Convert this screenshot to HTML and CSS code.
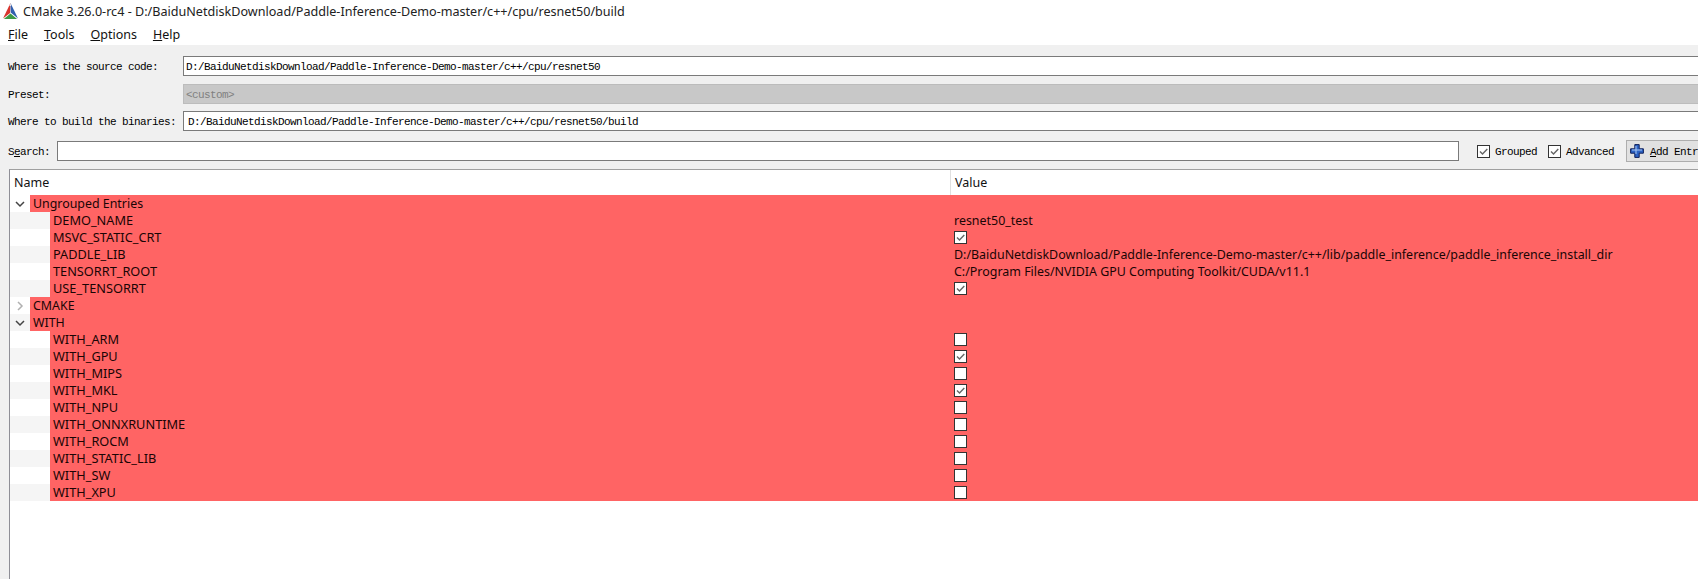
FILE: index.html
```html
<!DOCTYPE html>
<html lang="en">
<head>
<meta charset="utf-8">
<title>CMake</title>
<link rel="stylesheet" href="styles.css">
</head>
<body>
<header class="titlebar">
  <svg class="logo" viewBox="0 0 16 16" width="17" height="16"><polygon points="8,0 7.6,10 0.5,15.5" fill="#d8352e"/><polygon points="8,0 8.2,9.6 15.5,15.5" fill="#2f5fae"/><polygon points="1.4,16 8,10.6 14.6,16" fill="#3c9a46"/><polygon points="8,0 6.9,3 8.6,3" fill="#e9e9e9"/></svg>
  <span>CMake 3.26.0-rc4 - D:/BaiduNetdiskDownload/Paddle-Inference-Demo-master/c++/cpu/resnet50/build</span>
</header>
<nav class="menubar">
  <span><u>F</u>ile</span><span><u>T</u>ools</span><span><u>O</u>ptions</span><span><u>H</u>elp</span>
</nav>
<main class="form">
  <div class="field-row">
    <label class="label">Where is the source code:</label>
    <div class="field field-source">D:/BaiduNetdiskDownload/Paddle-Inference-Demo-master/c++/cpu/resnet50</div>
  </div>
  <div class="field-row">
    <label class="label">Preset:</label>
    <div class="field field-preset">&lt;custom&gt;</div>
  </div>
  <div class="field-row">
    <label class="label">Where to build the binaries:</label>
    <div class="field field-build">D:/BaiduNetdiskDownload/Paddle-Inference-Demo-master/c++/cpu/resnet50/build</div>
  </div>
  <div class="search-row">
    <label class="label label-search">S<u>e</u>arch:</label>
    <div class="field field-search"></div>
    <div class="opt opt-grouped"><span class="check"><svg viewBox="0 0 11 11"><path d="M2 5.5l2.5 2.5 4.8-5" class="tick"/></svg></span><span class="label">Grouped</span></div>
    <div class="opt opt-advanced"><span class="check"><svg viewBox="0 0 11 11"><path d="M2 5.5l2.5 2.5 4.8-5" class="tick"/></svg></span><span class="label">Advanced</span></div>
    <div class="add-btn">
      <svg viewBox="0 0 14 14" width="14" height="14"><path d="M4.8.6h4.4v4.2h4.2v4.4H9.2v4.2H4.8V9.2H.6V4.8h4.2z" fill="#2c62c4" stroke="#10205a" stroke-width="1"/><path d="M2 6h10M6 2v8" stroke="#a8c8f4" stroke-width="1"/></svg>
      <span class="label"><u>A</u>dd Entry</span>
    </div>
  </div>
  <section class="tree">
    <div class="tree-head"><div class="head-name">Name</div><div class="head-value">Value</div></div>
    <div class="tree-body">
      <div class="row group"><div class="gutter"><svg class="chev" viewBox="0 0 10 10"><path d="M1 3l4 4 4-4"/></svg></div><div class="cell-name">Ungrouped Entries</div><div class="cell-value"></div></div>
      <div class="row"><div class="gutter"></div><div class="cell-name">DEMO_NAME</div><div class="cell-value">resnet50_test</div></div>
      <div class="row"><div class="gutter"></div><div class="cell-name">MSVC_STATIC_CRT</div><div class="cell-value"><span class="check"><svg viewBox="0 0 11 11"><path d="M2 5.5l2.5 2.5 4.8-5" class="tick"/></svg></span></div></div>
      <div class="row"><div class="gutter"></div><div class="cell-name">PADDLE_LIB</div><div class="cell-value">D:/BaiduNetdiskDownload/Paddle-Inference-Demo-master/c++/lib/paddle_inference/paddle_inference_install_dir</div></div>
      <div class="row"><div class="gutter"></div><div class="cell-name">TENSORRT_ROOT</div><div class="cell-value">C:/Program Files/NVIDIA GPU Computing Toolkit/CUDA/v11.1</div></div>
      <div class="row"><div class="gutter"></div><div class="cell-name">USE_TENSORRT</div><div class="cell-value"><span class="check"><svg viewBox="0 0 11 11"><path d="M2 5.5l2.5 2.5 4.8-5" class="tick"/></svg></span></div></div>
      <div class="row group"><div class="gutter"><svg class="chev chev-closed" viewBox="0 0 10 10"><path d="M3 1l4 4-4 4"/></svg></div><div class="cell-name">CMAKE</div><div class="cell-value"></div></div>
      <div class="row group"><div class="gutter"><svg class="chev" viewBox="0 0 10 10"><path d="M1 3l4 4 4-4"/></svg></div><div class="cell-name">WITH</div><div class="cell-value"></div></div>
      <div class="row"><div class="gutter"></div><div class="cell-name">WITH_ARM</div><div class="cell-value"><span class="check"></span></div></div>
      <div class="row"><div class="gutter"></div><div class="cell-name">WITH_GPU</div><div class="cell-value"><span class="check"><svg viewBox="0 0 11 11"><path d="M2 5.5l2.5 2.5 4.8-5" class="tick"/></svg></span></div></div>
      <div class="row"><div class="gutter"></div><div class="cell-name">WITH_MIPS</div><div class="cell-value"><span class="check"></span></div></div>
      <div class="row"><div class="gutter"></div><div class="cell-name">WITH_MKL</div><div class="cell-value"><span class="check"><svg viewBox="0 0 11 11"><path d="M2 5.5l2.5 2.5 4.8-5" class="tick"/></svg></span></div></div>
      <div class="row"><div class="gutter"></div><div class="cell-name">WITH_NPU</div><div class="cell-value"><span class="check"></span></div></div>
      <div class="row"><div class="gutter"></div><div class="cell-name">WITH_ONNXRUNTIME</div><div class="cell-value"><span class="check"></span></div></div>
      <div class="row"><div class="gutter"></div><div class="cell-name">WITH_ROCM</div><div class="cell-value"><span class="check"></span></div></div>
      <div class="row"><div class="gutter"></div><div class="cell-name">WITH_STATIC_LIB</div><div class="cell-value"><span class="check"></span></div></div>
      <div class="row"><div class="gutter"></div><div class="cell-name">WITH_SW</div><div class="cell-value"><span class="check"></span></div></div>
      <div class="row"><div class="gutter"></div><div class="cell-name">WITH_XPU</div><div class="cell-value"><span class="check"></span></div></div>
    </div>
  </section>
</main>
</body>
</html>
```
FILE: styles.css
```css
* { box-sizing: border-box; }
html, body { margin: 0; height: 100%; overflow: hidden; }
body { width: 1698px; height: 579px; background: #f0f0f0; font: 12px "Noto Sans", sans-serif; color: #111; display: flex; flex-direction: column; }

.titlebar { height: 22px; background: #fff; display: flex; align-items: center; padding-left: 2px; gap: 4px; font-size: 12.6px; color: #222; flex: none; }
.logo { flex: none; }
.menubar { height: 23px; background: #fff; display: flex; padding: 4px 0 0 8px; gap: 16px; font-size: 12.5px; line-height: 18px; flex: none; }

.form { flex: 1; display: flex; flex-direction: column; padding-top: 11px; min-height: 0; }
.label { font: 11px/14px "Liberation Mono", monospace; letter-spacing: -0.6px; color: #000; white-space: pre; padding-top: 2px; }
.field-row { height: 20px; display: flex; align-items: center; margin-bottom: 7px; padding-left: 8px; flex: none; }
.field-row:first-child { margin-bottom: 8px; }
.field-row > .label { width: 175px; flex: none; }
.field { height: 20px; width: 1600px; flex: none; background: #fff; border: 1px solid #7a7a7a; font: 11px/20px "Liberation Mono", monospace; letter-spacing: -0.6px; padding-left: 2px; white-space: pre; color: #000; }
.field-preset { background: #c8c8c8; border-color: #bcbcbc; color: #808080; }
.field-build { padding-left: 4px; }

.search-row { height: 22px; display: flex; align-items: center; padding-left: 8px; margin-top: 2px; flex: none; }
.label-search { width: 49px; flex: none; }
.field-search { width: 1402px; }
.opt { display: flex; align-items: center; gap: 5px; flex: none; }
.opt-grouped { margin-left: 18px; width: 71px; }
.opt-advanced { width: 78px; }
.add-btn { height: 22px; width: 100px; flex: none; display: flex; align-items: center; gap: 6px; background: #e1e1e1; border: 1px solid #adadad; padding-left: 3px; }

.check { width: 13px; height: 13px; border: 1px solid #333; background: #fff; display: block; flex: none; }
.check svg { display: block; width: 11px; height: 11px; }
.tick { fill: none; stroke: #666; stroke-width: 1.4; }

.tree { margin: 7px 0 0 9px; flex: 1; min-height: 0; border-top: 1px solid #a0a0a0; border-left: 1px solid #8e8e96; background: #fff; }
.tree-head { height: 25px; display: flex; align-items: center; font-size: 12.5px; }
.head-name { width: 941px; height: 100%; padding: 4px 0 0 4px; border-right: 1px solid #e0e0e0; }
.head-value { padding-left: 4px; }

.row { height: 17px; display: flex; align-items: center; background: #ff6464; font-size: 12.45px; line-height: 17px; color: #1a0505; white-space: pre; }
.gutter { width: 40px; height: 100%; background: #fff; flex: none; display: flex; align-items: center; padding-left: 5px; }
.row:nth-child(even) .gutter { background: #f5f5f5; }
.group .gutter { width: 20px; }
.cell-name { padding-left: 3px; font-size: 12.75px; }
.row:not(.group) .cell-name { width: 900px; }
.group .cell-name { width: 920px; font-size: 12.4px; }
.cell-value { padding-left: 4px; display: flex; align-items: center; }
.chev { width: 10px; height: 10px; fill: none; stroke: #444; stroke-width: 1.5; }
.chev-closed { stroke: #b0b0b0; }
```
